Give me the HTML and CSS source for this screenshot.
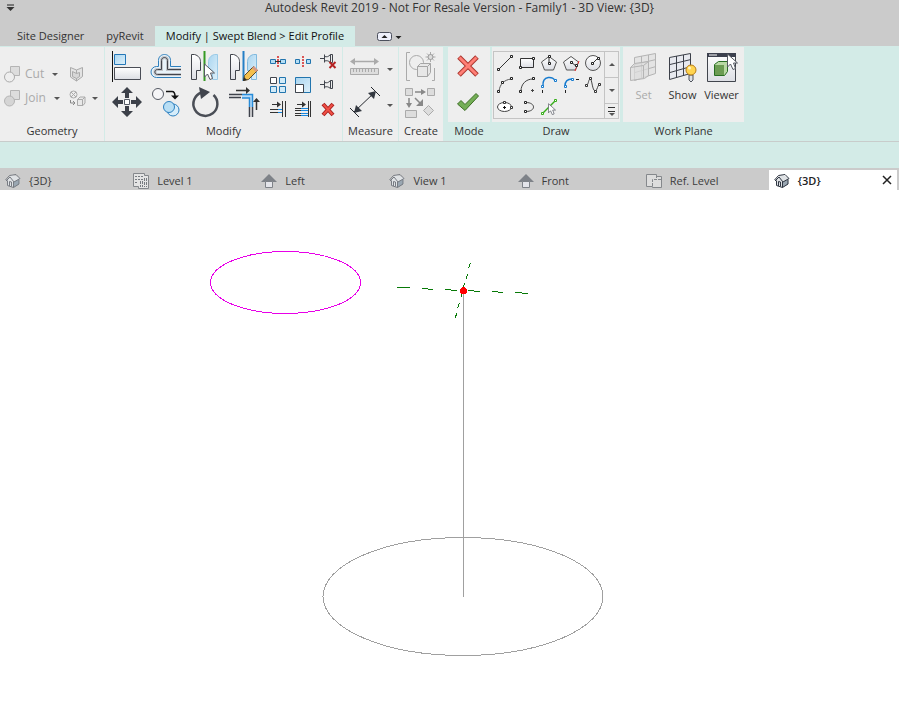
FILE: index.html
```html
<!DOCTYPE html>
<html lang="en">
<head>
<meta charset="utf-8">
<title>Autodesk Revit 2019</title>
<link rel="stylesheet" href="styles.css">
</head>
<body>
<svg class="defs" aria-hidden="true">
  <defs>
    <linearGradient id="steel" x1="0" y1="0" x2="0" y2="1"><stop offset="0" stop-color="#fff"/><stop offset="1" stop-color="#dcdee4"/></linearGradient>
    <linearGradient id="sky" x1="0" y1="0" x2="1" y2="1"><stop offset="0" stop-color="#a9d5f0"/><stop offset="1" stop-color="#def0fa"/></linearGradient>
    <symbol id="house" viewBox="0 0 16 16">
      <path d="M1.500 6.500 7 1.500l7.500 3V11L8.500 14.500 2.500 12.500V7" fill="#dfe2e5"/>
      <path d="M8.500 9 14 6v5.500L8.500 14.500z" fill="#9aa7b2"/>
      <path d="M.5 7 4.500 2.500 11 1.500l4 4-6 3.500-4-5L1 8M2.500 7.500v5l6 2V9M14 6.500v4.500l-5.500 3.500M4.500 13V8.500l2 .5v4.500" fill="none" stroke="currentColor"/>
    </symbol>
    <symbol id="arrowhouse" viewBox="0 0 16 16">
      <path d="M8 1 0 9h16z" fill="#7e8288"/><path d="M4.500 8.500h7v6h-7z" fill="#e4e5ea" stroke="#7e8288"/>
    </symbol>
    <symbol id="cursor" viewBox="0 0 11 17"><path d="M.5 1v13l3-3 2.500 5.500 2.500-1L6.500 10h4z" fill="#fff" stroke="#555962"/></symbol>
  </defs>
</svg>
<header class="titlebar">
  <button class="quick" aria-label="Customize Quick Access Toolbar"><svg width="9" height="8"><path d="M1 1h7" stroke="#222"/><path d="M.5 3h8L4.500 7z" fill="#333"/></svg></button>
  <h1>Autodesk Revit 2019 - Not For Resale Version - Family1 - 3D View: {3D}</h1>
</header>
<nav class="tabs">
  <button>Site Designer</button><button>pyRevit</button><button class="active">Modify | Swept Blend &gt; Edit Profile</button>
  <button class="minimize" aria-label="Minimize ribbon"><svg width="25" height="10"><rect x=".5" y=".5" width="14" height="8" rx="2" fill="#eef0fb" stroke="#4b4f5c"/><path d="M4.500 6h6l-3-3z" fill="#222"/><path d="M18.500 4h6l-3 3z" fill="#222"/></svg></button>
</nav>
<main class="ribbon">
  <section class="panel geometry"><div class="body">
    <button class="labelled" disabled><svg width="17" height="17"><path d="M6.500.500h9v9h-9z" fill="#ddd" stroke="#b4b4b4"/><circle cx="5.500" cy="11" r="5" fill="#eee" stroke="#aaa"/></svg><span>Cut</span><i class="drop"></i></button>
    <button aria-label="Cope" disabled><svg width="16" height="16"><path d="M1.500 1.500 7.500 4l6-2.500v9L7.500 15l-6-4zM7.500 4v11" fill="#e3e3e3" stroke="#aaa"/><path d="m3.500 5.500 4 2 3-1v4l-3 2-4-2z" fill="#d7d7d7" stroke="#aaa"/></svg></button>
    <button class="labelled" disabled><svg width="17" height="17"><path d="M6.500.500h9v9h-9z" fill="#ddd" stroke="#b4b4b4"/><circle cx="5.500" cy="11" r="5" fill="#d5d5d5" stroke="#b4b4b4"/></svg><span>Join</span><i class="drop"></i></button>
    <button class="labelled" aria-label="Split face" disabled><svg width="17" height="17"><circle cx="4.500" cy="4.500" r="3.500" fill="none" stroke="#aaa"/><path d="m2 2 5 5M7 2 2 7" stroke="#aaa"/><path d="M1.500 10v3h4M4 11l2 2-2 2" fill="none" stroke="#888"/><path d="M8.500 9.500 11 7h5v6l-2 2.500H8.500zm0 0h5V15m0-5.500L16 7" fill="#e8e8e8" stroke="#aaa"/></svg><i class="drop"></i></button>
  </div><h2>Geometry</h2></section>

  <section class="panel modify"><div class="body">
    <div class="large">
      <button aria-label="Align"><svg width="32" height="32"><path d="M1.500 0v31" stroke="#111"/><path d="M3.500 3.500h11v10h-11z" fill="url(#sky)" stroke="#2477b8"/><path d="M3.500 16.500h26v12h-26z" fill="url(#steel)" stroke="#4a4d56"/></svg></button>
      <button aria-label="Offset"><svg width="32" height="32"><path d="M31 26.500H6.500a5 5 0 0 1 0-11h2V9.500c0-8 12-8 12 0v6H31" fill="#e8f3fa" stroke="#2f7fbc"/><path d="M31 23.500H7.500c-3.500 0-3.500-5 0-5h4V9.500c0-4 6-4 6 0v9H31" fill="none" stroke="#c4c6ca" stroke-width="3"/><path d="M31 23.500H7.500c-3.500 0-3.500-5 0-5h4V9.500c0-4 6-4 6 0v9H31" fill="none" stroke="#41444c"/></svg></button>
      <button aria-label="Mirror - Pick Axis"><svg width="32" height="32"><path d="M2.500 3.500h3c4 1 6 4 6 7v9h-4v9h-5z" fill="url(#steel)" stroke="#41444c"/><path d="M28.500 3.500h-3c-4 1-6 4-6 7v9h4v9h5z" fill="url(#sky)" stroke="#9bcae7"/><path d="M15.500 0v30" stroke="#369b24" stroke-width="2"/><use href="#cursor" x="15" y="12" width="11" height="17"/></svg></button>
      <button aria-label="Mirror - Draw Axis"><svg width="32" height="32"><path d="M2.500 3.500h3c4 1 6 4 6 7v9h-4v9h-5z" fill="url(#steel)" stroke="#41444c"/><path d="M28.500 3.500h-3c-4 1-6 4-6 7v9h4v9h5z" fill="url(#sky)" stroke="#80b9de"/><path d="M15.500 0v30" stroke="#247fc6" stroke-width="2"/><path d="m15.500 29.500 1-5 9-9 4 4-9 9z" fill="#f4bf4d" stroke="#5c4a2a"/><path d="m24 17 2-2 4 4-2 2z" fill="#d69a86"/><path d="m15 30 1-4 3 3z" fill="#302e2b"/></svg></button>
      <button aria-label="Move"><svg width="32" height="32"><path d="m16 0 6 6h-4v5h-4V6h-4zM16 30l6-6h-4v-5h-4v5h-4zM1 15l6-6v4h5v4H7v4zM31 15l-6-6v4h-5v4h5v4z" fill="#3c4049"/><path d="M13.500 12.500h5v5h-5z" fill="#fff" stroke="#555b66"/></svg></button>
      <button aria-label="Copy"><svg width="32" height="32"><circle cx="8" cy="7" r="5.500" fill="#f5f5f7" stroke="#555963"/><path d="M16 4.500h6c2 0 3 1 3 5" fill="none" stroke="#111" stroke-width="1.500"/><path d="M21 8.500h8l-4 4z" fill="#111"/><circle cx="23" cy="23" r="6" fill="#d6edfa" stroke="#2d80bf"/><circle cx="19" cy="20" r="5.500" fill="#b8def4" stroke="#2d80bf"/></svg></button>
      <button aria-label="Rotate"><svg width="32" height="32"><path d="M12.500 5.500a12 12 0 1 0 12 2.500" fill="none" stroke="#4a4e56" stroke-width="2.500"/><path d="m10 0 11 5-9 7z" fill="#41454d"/></svg></button>
      <button aria-label="Trim/Extend to Corner"><svg width="32" height="32"><path d="M14 7h11v13h-4v-9h-7z" fill="#b8dcfa"/><path d="M1 7.500h13M1 10.500h12M21.500 20v10M24.500 20v10" fill="none" stroke="#3e424b" stroke-width="1.500"/><path d="M14 7.500h10.500V20M14 11h7.500v9" fill="none" stroke="#278bd8" stroke-width="1.500"/><path d="M8 3.500h11M28.500 23V13" stroke="#333" stroke-width="1.500"/><path d="m18 0 4 3.500-4 3.500zM25 15l3.500-4 3.500 4z" fill="#333"/></svg></button>
    </div>
    <div class="small">
      <button aria-label="Split Element"><svg width="17" height="17"><path d="M.5 6.500h5v4h-5zM10.500 6.500h5v4h-5z" fill="#b4def5" stroke="#2275ae"/><path d="M5 8.500h6" stroke="#333"/><path d="M8 3v12" stroke="#d32323" stroke-dasharray="2 1" stroke-width="1.500"/></svg></button>
      <button aria-label="Split with Gap"><svg width="17" height="17"><path d="M.5 6.500h4v4h-4zM11.500 6.500h4v4h-4z" fill="#b4def5" stroke="#2275ae"/><path d="M8 3v12" stroke="#d32323" stroke-dasharray="2 1" stroke-width="1.500"/></svg></button>
      <button aria-label="Unpin"><svg width="17" height="17"><path d="M0 5.500h4M4.500 1.500v8M4.500 3.500C7 4 8 4 10.500 1.500h2v8h-2C8 7.500 7 7.500 4.500 8M10.500 1.500v8" fill="none" stroke="#41454d"/><path d="m9.500 9 6 6m0-6-6 6" stroke="#b52222" stroke-width="2"/></svg></button>
      <button aria-label="Array"><svg width="17" height="17"><path d="M.5.500h6v6h-6z" fill="#fff" stroke="#41454d"/><path d="M9.500.500h6v6h-6zM.5 9.500h6v6h-6zM9.500 9.500h6v6h-6z" fill="#d2ebf8" stroke="#2275ae"/></svg></button>
      <button aria-label="Scale"><svg width="17" height="17"><path d="M.5.500h15v15H.5z" fill="url(#sky)" stroke="#2275ae"/><path d="M.5 7.500h8v8h-8z" fill="#fff" stroke="#41454d"/></svg></button>
      <button aria-label="Pin"><svg width="17" height="17"><path d="M0 7.500h4M4.500 3.500v8M4.500 5.500C7 6 8 6 10.500 3.500h2v8h-2C8 9.500 7 9.500 4.500 10M10.500 3.500v8" fill="none" stroke="#41454d"/></svg></button>
      <button aria-label="Trim/Extend Single Element"><svg width="17" height="17"><path d="M2 3.500h6M0 8.500h8M0 11.500h8M12.500 0v16M15.500 0v16" stroke="#333"/><path d="m7 .5 4 3-4 3z" fill="#333"/><path d="M8 8.500h4M8 11.500h4" stroke="#1687e0"/></svg></button>
      <button aria-label="Trim/Extend Multiple Elements"><svg width="17" height="17"><path d="M2 3.500h6M0 7.500h6M0 9.500h6M0 12.500h6M0 14.500h6M13.500 0v16M15.500 0v16" stroke="#333"/><path d="m7 .5 4 3-4 3z" fill="#333"/><path d="M6 7.500h7M6 9.500h7M6 12.500h7M6 14.500h7" stroke="#1687e0"/></svg></button>
      <button aria-label="Delete"><svg width="17" height="17"><path d="m3 3 10 11M13 3 3 14" stroke="#a81f1f" stroke-width="4"/><path d="m3.500 3.500 9 10M12.500 3.500l-9 10" stroke="#f05045" stroke-width="2"/></svg></button>
    </div>
  </div><h2>Modify</h2></section>

  <section class="panel measure"><div class="body">
    <button aria-label="Measure Between References" disabled><svg width="32" height="32"><path d="M3 10.500h25" stroke="#aaa" stroke-width="1.500"/><path d="m6 7-5 3.500L6 14zM25 7l5 3.500-5 3.500z" fill="#aaa"/><path d="M1.500 17.500h28v6h-28z" fill="#ddd" stroke="#aaa"/><path d="M4.500 18v3M7.500 18v3M10.500 18v3M13.500 18v3M16.500 18v3M19.500 18v3M22.500 18v3M25.500 18v3" stroke="#aaa"/></svg><i class="drop"></i></button>
    <button aria-label="Aligned Dimension"><svg width="32" height="32"><path d="m5 25 21-20M1 21l9 9M22 0l9 9" stroke="#24272d"/><path d="m5 26 2-8 6 6zM27 4l-2 8-6-6z" fill="#333840"/></svg><i class="drop"></i></button>
  </div><h2>Measure</h2></section>

  <section class="panel create"><div class="body">
    <button aria-label="Create Assembly" disabled><svg width="32" height="32"><path d="M5 1.500H1.500v28H5M27 29.500h2.500V17" fill="none" stroke="#aaa"/><circle cx="11.500" cy="11.500" r="7" fill="#eee" stroke="#aaa"/><path d="m12.500 15.500 3-3h10v9l-3 4h-10zm0 0h10v10m0-10 3-3" fill="#e7e7e7" stroke="#a5a5a5"/><path d="M25.500 1v10M20.500 6h10M22 2.500l7 7M29 2.500l-7 7" stroke="#aaa"/><circle cx="25.500" cy="6" r="2.500" fill="#ddd" stroke="#999"/></svg></button>
    <button aria-label="Create Group" disabled><svg width="32" height="32"><path d="M.5 1.500h7v7h-7zM22.500 1.500h7v7h-7zM.5 23.500h11v7H.5zM23.500 18.500l5 5-5 5-5-5z" fill="#ddd" stroke="#aaa"/><path d="M10 5h8M4 11v7M10 11l6 6" stroke="#888" stroke-width="1.500"/><path d="m16 2 5 3-5 3zM1 16h6l-3 5zM18 12v7h-7z" fill="#888"/></svg></button>
  </div><h2>Create</h2></section>

  <section class="panel mode tinted"><div class="body">
    <button aria-label="Cancel Edit Mode"><svg width="24" height="24"><path d="m2 2 18 18M20 2 2 20" stroke="#ae3730" stroke-width="5"/><path d="m2.500 2.500 17 17M19.500 2.500l-17 17" stroke="#ff7f76" stroke-width="3"/></svg></button>
    <button aria-label="Finish Edit Mode"><svg width="24" height="24"><path d="m.5 13 3.500-3.500 4 4L19 2.500l2.500 2.500L8 19.500z" fill="#74ae56" stroke="#3d6e25"/></svg></button>
  </div><h2>Mode</h2></section>

  <section class="panel draw tinted"><div class="body"><div class="gallery">
    <button aria-label="Line"><svg width="18" height="18"><path d="M3 15 15 3" stroke="#333"/><path d="M1.500 14.500h2v2h-2zM14.500 1.500h2v2h-2z" fill="#fff" stroke="#222"/></svg></button>
    <button aria-label="Rectangle"><svg width="18" height="18"><path d="M2.500 4.500h13v9h-13z" fill="url(#steel)" stroke="#333"/><path d="M1.500 12.500h2v2h-2zM14.500 3.500h2v2h-2z" fill="#fff" stroke="#222"/></svg></button>
    <button aria-label="Inscribed Polygon"><svg width="18" height="18"><path d="M9 2.500 16.500 8l-3 8h-9l-3-8z" fill="url(#steel)" stroke="#555"/><path d="M9 3v6" stroke="#333"/><path d="M8.500 8.500h2v2h-2zM8.500 1.500h2v2h-2z" fill="#fff" stroke="#222"/></svg></button>
    <button aria-label="Circumscribed Polygon"><svg width="18" height="18"><path d="M9 2.500 16.500 8l-3 8h-9l-3-8z" fill="url(#steel)" stroke="#555"/><path d="m9 8 5 4" stroke="#333"/><path d="m17 7-4 10" stroke="#e22" stroke-dasharray="3 1"/><path d="M8.500 7.500h2v2h-2zM13.500 10.500h2v2h-2z" fill="#fff" stroke="#222"/></svg></button>
    <button aria-label="Circle"><svg width="18" height="18"><circle cx="9" cy="9" r="7.500" fill="url(#steel)" stroke="#555"/><path d="m9 9 5-5" stroke="#333"/><path d="M7.500 8.500h2v2h-2zM13.500 3.500h2v2h-2z" fill="#fff" stroke="#222"/></svg></button>
    <button aria-label="Start-End-Radius Arc"><svg width="18" height="18"><path d="M3 15C4 8 8 4 15 3" fill="none" stroke="#555"/><path d="M1.500 14.500h2v2h-2zM5.500 5.500h2v2h-2zM14.500 1.500h2v2h-2z" fill="#fff" stroke="#222"/></svg></button>
    <button aria-label="Center-ends Arc"><svg width="18" height="18"><path d="M3 15C3 8 8 3 15 3M13 14.500h3M14.500 13v3" fill="none" stroke="#444"/><path d="M1.500 14.500h2v2h-2zM14.500 1.500h2v2h-2z" fill="#fff" stroke="#222"/></svg></button>
    <button aria-label="Tangent End Arc"><svg width="18" height="18"><path d="M3 10c-1-11 11-10 12-5" fill="none" stroke="#167bcf" stroke-width="1.500"/><path d="M1.500 9.500h2v2h-2zM14.500 3.500h2v2h-2z" fill="#fff" stroke="#167bcf"/><path d="M2.500 14v3" stroke="#222"/></svg></button>
    <button aria-label="Fillet Arc"><svg width="18" height="18"><path d="M3 10c0-5 3-7 7-7" fill="none" stroke="#167bcf" stroke-width="1.500"/><path d="M2.500 9.500h2v2h-2zM9.500 2.500h2v2h-2z" fill="#fff" stroke="#167bcf"/><path d="M3.500 14v3M14 3.500h3" stroke="#222"/></svg></button>
    <button aria-label="Spline"><svg width="18" height="18"><path d="M2 9c3 0 2-5 4-6s2 11 5 12c3-1 2-6 5-7" fill="none" stroke="#444"/><path d="M1.500 8.500h2v2h-2zM5.500 1.500h2v2h-2zM10.500 14.500h2v2h-2zM14.500 7.500h2v2h-2z" fill="#fff" stroke="#333"/></svg></button>
    <button aria-label="Ellipse"><svg width="18" height="18"><ellipse cx="8.500" cy="9" rx="7" ry="4.500" fill="#fff" stroke="#444"/><path d="M7 9.500h3M8.500 8v3" stroke="#111"/><path d="M14.500 8.500h2v2h-2zM7.500 3.500h2v2h-2z" fill="#fff" stroke="#333"/></svg></button>
    <button aria-label="Partial Ellipse"><svg width="18" height="18"><path d="M8 4.500c10 0 10 9 0 9" fill="none" stroke="#444"/><path d="M6.500 3.500h2v2h-2zM6.500 12.500h2v2h-2z" fill="#fff" stroke="#222"/></svg></button>
    <button aria-label="Pick Lines"><svg width="18" height="18"><path d="M3 15 15 3" stroke="#35ad19" stroke-width="1.500"/><path d="M1.500 14.500h2v2h-2zM14.500 1.500h2v2h-2z" fill="#fff" stroke="#35ad19"/><use href="#cursor" x="8" y="5" width="8" height="12"/></svg></button>
    <div class="scroll"><button aria-label="Scroll up"><i class="drop up"></i></button><button aria-label="Scroll down"><i class="drop"></i></button><button class="more" aria-label="More tools"><i class="drop"></i></button></div>
  </div></div><h2>Draw</h2></section>

  <section class="panel plane tinted"><div class="body">
    <button disabled><svg width="32" height="32"><path d="m6.500 5.500 21-4v20l-21 7z" fill="#e4e4e4" stroke="#b4b4b4"/><path d="M13.500 4v22M20.500 3v21M7 12.500l21-5M7 20.500l21-6" stroke="#b4b4b4"/><path d="m2.500 15.500 4-4 14-2v14l-4 3-14 2zm0 0 13-2v13m0-13 5-4" fill="#ddd" fill-opacity=".7" stroke="#b4b4b4"/></svg><span>Set</span></button>
    <button><svg width="32" height="32"><path d="m2.500 5.500 21-4v20l-21 6z" fill="#e7e9ef" stroke="#3c4049"/><path d="M9.500 4v22M16.500 3v21M3 12.500l21-5M3 20.500l21-6" stroke="#3c4049"/><path d="M22 23h4v5l-2 2-2-2z" fill="#dde1e7" stroke="#4f535b"/><circle cx="24" cy="18" r="5" fill="#ffd450" stroke="#b77c16"/><circle cx="22.500" cy="16" r="1.500" fill="#fff5c8"/></svg><span>Show</span></button>
    <button><svg width="32" height="32"><path d="M1.500 1.500h28v28h-28z" fill="url(#steel)" stroke="#41454d"/><path d="M1 1h29v4H1z" fill="#3c404e"/><path d="M3 3h8" stroke="#fff"/><path d="m8.500 12.500 4-3h9v10l-3 4h-10z" fill="#b9d9a4" stroke="#286e23"/><path d="M9 13h9v10H9z" fill="#6c9c53"/><use href="#cursor" x="21" y="1" width="11" height="17"/></svg><span>Viewer</span></button>
  </div><h2>Work Plane</h2></section>
</main>
<div class="options"></div>
<nav class="views">
  <a href="#view"><svg><use href="#house"/></svg>{3D}</a>
  <a href="#view"><svg viewBox="0 0 16 16"><path d="M.5.500h11v2h4v13h-10v-2h-5z" fill="#e4e4e4" stroke="#85888c"/><path d="M2 3.500h8M2 6.500h8M2 9.500h3" stroke="#777b80" stroke-dasharray="2 1"/><path d="M7.500 8v6M9.500 8v6M11.500 5v9M13.500 5v9" stroke="#777b80" stroke-dasharray="3 1"/></svg>Level 1</a>
  <a href="#view"><svg><use href="#arrowhouse"/></svg>Left</a>
  <a href="#view"><svg><use href="#house"/></svg>View 1</a>
  <a href="#view"><svg><use href="#arrowhouse"/></svg>Front</a>
  <a href="#view"><svg viewBox="0 0 16 16"><path d="M.5 1.500h10v2h5v11h-9v-1h-6z" fill="#ddd" stroke="#85888c"/><path d="M6.500 13V6.500H15M10.500 2v5" fill="none" stroke="#85888c" stroke-dasharray="3 1"/></svg>Ref. Level</a>
  <div class="current"><a href="#view"><svg><use href="#house"/></svg>{3D}</a><button aria-label="Close view"><svg viewBox="0 0 10 10"><path d="m1 1 8 8M9 1 1 9" stroke="#222" stroke-width="1.500"/></svg></button></div>
</nav>
<div class="viewport" id="view">
  <svg width="899" height="526" viewBox="0 190 899 526" fill="none" shape-rendering="crispEdges" role="img" aria-label="3D model view">
    <ellipse cx="285.500" cy="282.500" rx="75" ry="31" stroke="#e800e8"/>
    <ellipse cx="463" cy="596.500" rx="140" ry="59" stroke="#a0a0a0"/>
    <path d="M463.500 290v307" stroke="#a0a0a0"/>
    <path d="M397 287.500h13M422 288.500l11 1M445 289.500l12 1M468 290.500l12 1M492 291.500l11 1M515 292.500l13 1M470.500 263l-2 5.500M467.500 274l-1.500 5M464.500 283l-1 4M462 292l-1 5M459.500 303l-2 5M457 313l-2 5" stroke="#087a08"/>
    <circle cx="463.500" cy="290.500" r="3.500" fill="red"/>
  </svg>
</div>
</body>
</html>
```
FILE: styles.css
```css
* { box-sizing: border-box; }
body {
  margin: 0;
  min-height: 100vh;
  display: flex;
  flex-direction: column;
  background: #fff;
  color: #333;
  font: 11px/18px "Open Sans", "Noto Sans", sans-serif;
}
button {
  padding: 0;
  border: 0;
  background: none;
  color: inherit;
  font: inherit;
}
button:disabled { color: #aaa; }
svg { display: block; flex: none; }
h1, h2 { margin: 0; font-size: inherit; font-weight: 400; }
.defs { position: absolute; width: 0; height: 0; }

.titlebar {
  display: grid;
  grid-template-columns: 20px 1fr;
  height: 26px;
  padding-left: 6px;
  background: #cbcbcb;
}
.titlebar h1 { padding-right: 6px; text-align: center; font-size: 12px; line-height: 16px; }
.quick { align-self: start; padding-top: 4px; }

.tabs {
  display: flex;
  height: 20px;
  padding-left: 6px;
  background: #cbcbcb;
}
.tabs button { padding: 0 11px; }
.tabs .active { background: #d3ebe7; color: #111; }
.tabs .minimize { padding: 1px 22px 0; }

.ribbon {
  display: flex;
  background: #d3ebe7;
  border-top: 1px solid #d3ebe7;
  border-bottom: 1px solid #c8cccb;
}
.panel {
  display: flex;
  flex-direction: column;
  flex: none;
  margin-right: 1px;
  background: #eee;
}
.panel h2 { height: 19px; line-height: 18px; text-align: center; }
.tinted h2 { background: #d3ebe7; }
.body { height: 75px; }
.body button { display: flex; align-items: center; }

.drop {
  width: 0;
  border: 3px solid transparent;
  border-top-color: #555;
  border-bottom: 0;
}
.drop.up { transform: rotate(180deg); }

.geometry { width: 104px; }
.geometry .body {
  display: grid;
  grid-template: 24px 24px / 65px 34px;
  padding: 15px 0 0 4px;
}
.geometry span { margin: 0 8px 0 4px; font-size: 12px; }
.geometry svg + .drop { margin-left: 6px; }

.modify { width: 237px; }
.modify .body { display: flex; padding: 4px 0 0 6px; }
.large { display: grid; grid-template: 36px 32px / repeat(4, 39px); }
.small { display: grid; grid-template: repeat(3, 24px) / repeat(3, 25px); padding-left: 3px; margin-top: -2px; }
.large button { align-items: start; }

.measure { width: 55px; }
.measure .body { padding: 4px 0 0 6px; }
.measure button { height: 36px; gap: 6px; }
.measure svg { align-self: start; }

.create { width: 44px; margin-right: 5px; }
.create .body { padding: 4px 0 0 6px; }
.create button { height: 36px; align-items: start; }

.mode { width: 42px; margin-right: 2px; }
.mode .body { padding: 8px 0 0 9px; }
.mode button { height: 36px; align-items: start; }

.draw { width: 128px; margin-right: 3px; }
.draw .body { padding: 4px 1px 0; }
.gallery {
  display: grid;
  grid-template: repeat(3, 22px) / repeat(5, 22px) 14px;
  border: 1px solid #c4c4c4;
}
.gallery > button { justify-content: center; }
.scroll {
  grid-area: 1 / 6 / 4 / 7;
  display: grid;
  grid-template-rows: 25px 26px 15px;
  border-left: 1px solid #c4c4c4;
}
.scroll button { justify-content: center; }
.scroll button + button { border-top: 1px solid #c4c4c4; }
.scroll .more { flex-direction: column; gap: 1px; }
.more::before { content: ""; width: 7px; height: 3px; border: 1px solid #333; border-width: 1px 0; }

.plane { width: 121px; margin-right: 0; }
.plane .body { display: grid; grid-template-columns: repeat(3, 39px); padding: 5px 0 0 1px; }
.plane button { flex-direction: column; justify-content: start; gap: 2px; }

.options { height: 26px; background: #d3ebe7; }

.views {
  display: grid;
  grid-template-columns: repeat(7, 1fr);
  height: 22px;
  padding-right: 2px;
  background: #cbcbcb;
}
.views a {
  display: flex;
  align-items: center;
  gap: 8px;
  padding: 3px 0 0 5px;
  color: #3c3c3c;
  text-decoration: none;
}
.views svg { width: 16px; height: 16px; color: #777b82; }
.current {
  display: flex;
  justify-content: space-between;
  margin-top: 2px;
  padding-right: 5px;
  background: #fff;
}
.views .current a { padding-top: 1px; color: #222; font-weight: 600; }
.current a svg { color: #303743; }
.current button svg { width: 10px; height: 10px; }

.viewport { flex: 1; overflow: hidden; }
```
